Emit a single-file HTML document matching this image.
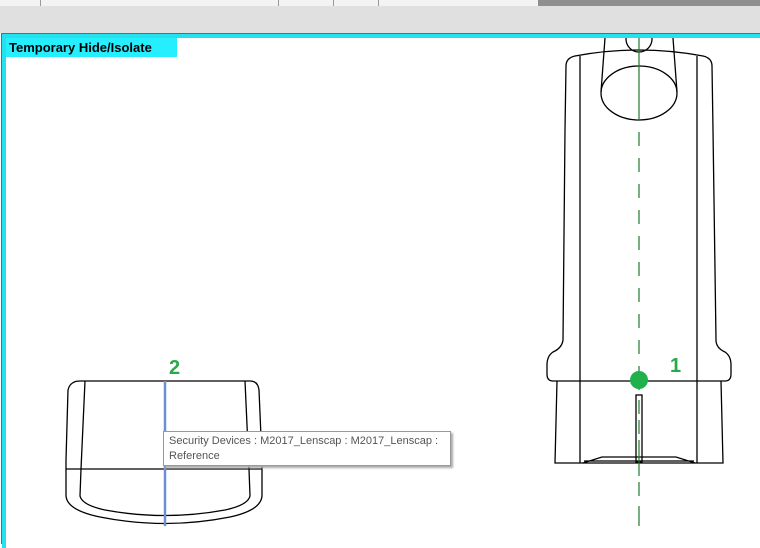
<!DOCTYPE html>
<html><head><style>
body{margin:0;width:760px;height:537px;overflow:hidden;background:#fff;position:relative;font-family:"Liberation Sans",sans-serif}
.tabs{position:absolute;left:0;top:0;width:760px;height:6px;background:#f3f3f3;border-bottom:1px solid #9a9a9a}
.gray{position:absolute;left:0;top:6px;width:760px;height:27px;background:#e0e0e0}
.frame{position:absolute;left:1px;top:33px;width:760px;height:510px;border-top:1px solid #3a7c86;border-left:1px solid #3a7c86}
.cy{position:absolute;left:2px;top:34px;width:760px;height:510px;border-top:4px solid #25e1ee;border-left:4px solid #25e1ee}
.lbl{position:absolute;left:6px;top:38px;width:171px;height:19px;background:#25eeff;font-weight:bold;font-size:13px;line-height:19px;padding-left:3px;box-sizing:border-box;color:#000}
.tip{position:absolute;left:163px;top:431px;width:288px;height:35px;background:#fff;border:1px solid #999;box-shadow:2px 2px 2px #aaa;font-size:11px;color:#555;padding:2px 5px;box-sizing:border-box;line-height:15px;white-space:nowrap}
</style></head><body>
<svg style="position:absolute;left:0;top:0" width="760" height="537">
<g fill="none" stroke="#000" stroke-width="1.3">
<circle cx="639" cy="39" r="13"/>
<path d="M605 38 L601 92 M673 38 L677 92"/>
<path d="M566 66 Q566 58 575 56 Q639 44 703 56 Q712 58 712 66 L713 130 L716 340 Q716 348 725 352 Q731 356 731 365 L731 374 Q731 381 725 381 L553 381 Q547 381 547 374 L547 365 Q547 356 553 352 Q562 348 563 340 L565 130 Z"/>
<line x1="580" y1="56" x2="580" y2="463"/><line x1="697" y1="56" x2="697" y2="463"/>
<ellipse cx="639" cy="93" rx="38" ry="27"/>
<path d="M557 381 L555 463 L723 463 L721 381"/>
<rect x="636" y="395" width="6" height="67"/>
<path d="M583 463 L602 457 L676 457 L695 463 M584 461 L694 461"/>
<path d="M80 381 L250 381 Q258 381 259 390 L262 460 L262 495 Q262 510 230 517 Q165 530 100 517 Q66 510 66 495 L66 460 L68 390 Q70 381 80 381 Z"/>
<path d="M85 381 L81 469 M245 381 L249 469"/>
<line x1="66" y1="469" x2="262" y2="469"/>
<path d="M81 469 L80 496 Q82 505 105 510 Q165 521 225 510 Q248 505 250 496 L249 469"/>
</g>
<path d="M639 38 V120 M639 132 V146 M639 158 V172 M639 184 V198 M639 210 V224 M639 236 V250 M639 262 V276 M639 288 V302 M639 314 V328 M639 340 V354 M639 366 V390 M639 400 V414 M639 420 V434 M639 440 V476 M639 482 V496 M639 506 V526" stroke="#1e7a2e" stroke-width="1.2"/>
<circle cx="639" cy="380" r="9" fill="#20b04c"/>
<line x1="165" y1="381" x2="165" y2="526" stroke="#6f8fcf" stroke-width="2.5"/>
<text x="670" y="372" font-family="Liberation Sans" font-weight="bold" font-size="20" fill="#2aa84c">1</text>
<text x="169" y="374" font-family="Liberation Sans" font-weight="bold" font-size="20" fill="#2aa84c">2</text>
</svg>
<div class="tabs"></div>
<div style="position:absolute;left:40px;top:0;width:1px;height:6px;background:#999"></div>
<div style="position:absolute;left:278px;top:0;width:1px;height:6px;background:#999"></div>
<div style="position:absolute;left:333px;top:0;width:1px;height:6px;background:#999"></div>
<div style="position:absolute;left:378px;top:0;width:1px;height:6px;background:#999"></div>
<div style="position:absolute;left:538px;top:0;width:222px;height:6px;background:#8f8f8f"></div>
<div class="gray"></div>
<div class="frame"></div><div class="cy"></div>
<div class="lbl">Temporary Hide/Isolate</div>
<div class="tip">Security Devices : M2017_Lenscap : M2017_Lenscap :<br>Reference</div>
</body></html>
